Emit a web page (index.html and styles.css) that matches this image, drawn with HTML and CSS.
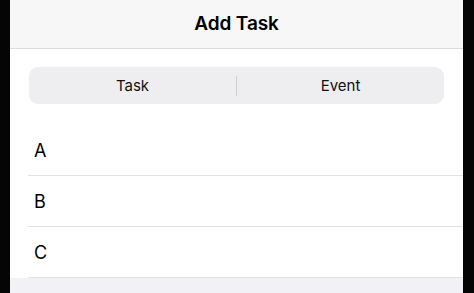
FILE: index.html
```html
<!DOCTYPE html>
<html>
<head>
<meta charset="utf-8">
<link rel="stylesheet" href="styles.css">
</head>
<body>
<div class="frame">
  <div class="bezel bezel-left"></div>
  <div class="screen">
    <header class="navbar"><h1 class="title">Add Task</h1></header>
    <div class="content">
      <div class="segmented">
        <div class="seg">Task</div>
        <div class="seg-divider"></div>
        <div class="seg">Event</div>
      </div>
      <ul class="list">
        <li class="row">A</li>
        <li class="row">B</li>
        <li class="row">C</li>
      </ul>
      <div class="footer"></div>
    </div>
  </div>
  <div class="bezel bezel-right"></div>
</div>
</body>
</html>
```

FILE: styles.css
```css
html, body {
  margin: 0;
  padding: 0;
  background: #050505;
}
body {
  font-family: Inter, "Liberation Sans", sans-serif;
  color: #000;
}
.frame {
  width: 474px;
  height: 293px;
  display: flex;
  overflow: hidden;
  background: #050505;
}
.bezel {
  background: #050505;
  flex-shrink: 0;
}
.bezel-left { width: 10px; }
.bezel-right { width: 11px; }
.screen {
  flex: 1;
  display: flex;
  flex-direction: column;
  background: #fff;
}
.navbar {
  height: 48px;
  background: #f7f7f7;
  border-bottom: 1px solid #dcdcde;
  display: flex;
  align-items: center;
  justify-content: center;
  flex-shrink: 0;
}
.title {
  margin: 0;
  font-size: 19px;
  font-weight: 600;
  letter-spacing: -0.1px;
  padding-bottom: 2px;
}
.content {
  flex: 1;
  display: flex;
  flex-direction: column;
}
.segmented {
  margin: 18px 19px 0 19px;
  height: 37px;
  background: #eeeef0;
  border-radius: 9px;
  display: flex;
  align-items: center;
}
.seg {
  flex: 1;
  text-align: center;
  font-size: 15px;
  font-weight: 400;
  color: #111;
}
.seg-divider {
  width: 1px;
  height: 20px;
  background: #cfcfd2;
}
.list {
  list-style: none;
  margin: 21px 0 0 18px;
  padding: 0;
}
.row {
  height: 50px;
  border-bottom: 1px solid #e2e2e4;
  display: flex;
  align-items: center;
  padding-left: 6px;
  font-size: 18px;
  font-weight: 400;
}
.footer {
  flex: 1;
  background: #f2f2f6;
}
```
